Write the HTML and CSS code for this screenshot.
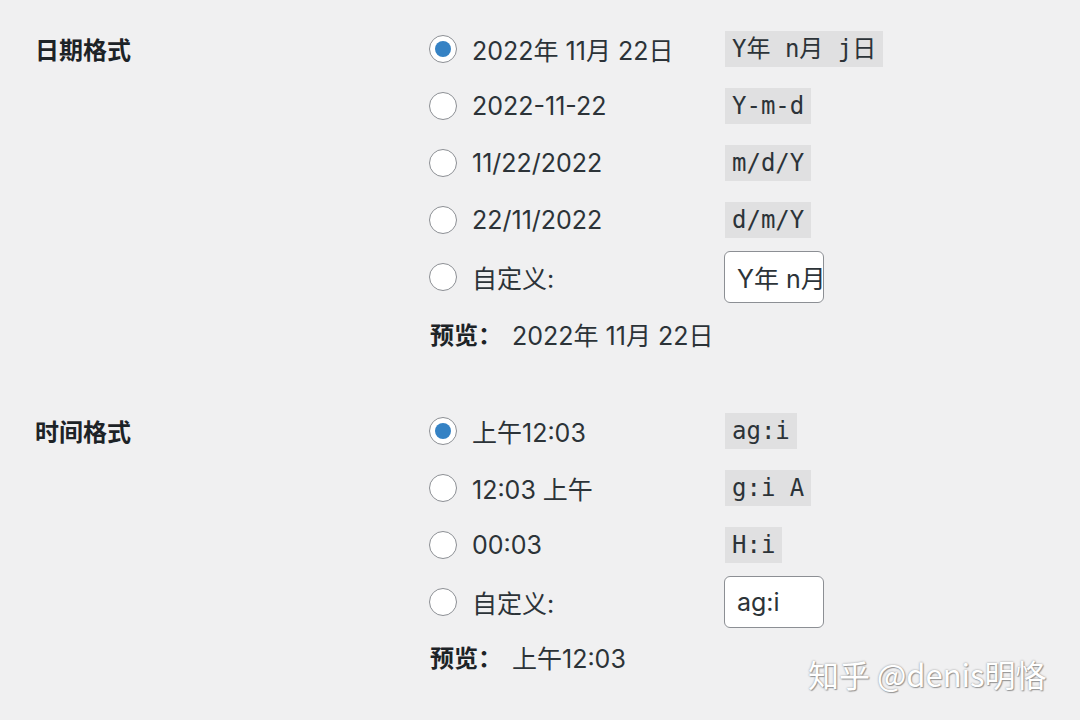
FILE: index.html
```html
<!DOCTYPE html>
<html lang="zh-CN">
<head>
<meta charset="utf-8">
<link rel="stylesheet" href="styles.css">
</head>
<body>
<div class="page">
  <section class="setting">
    <div class="th">日期格式</div>
    <div class="td">
      <label class="opt"><span class="radio checked"></span><span class="txt">2022年 11月 22日</span><code>Y年 n月 j日</code></label>
      <label class="opt"><span class="radio"></span><span class="txt">2022-11-22</span><code>Y-m-d</code></label>
      <label class="opt"><span class="radio"></span><span class="txt">11/22/2022</span><code>m/d/Y</code></label>
      <label class="opt"><span class="radio"></span><span class="txt">22/11/2022</span><code>d/m/Y</code></label>
      <label class="opt"><span class="radio"></span><span class="txt">自定义:</span><input class="input" type="text" value="Y年 n月 j日" readonly></label>
      <div class="preview"><strong>预览：</strong><span>2022年 11月 22日</span></div>
    </div>
  </section>
  <section class="setting second">
    <div class="th">时间格式</div>
    <div class="td">
      <label class="opt"><span class="radio checked"></span><span class="txt">上午12:03</span><code>ag:i</code></label>
      <label class="opt"><span class="radio"></span><span class="txt">12:03 上午</span><code>g:i A</code></label>
      <label class="opt"><span class="radio"></span><span class="txt">00:03</span><code>H:i</code></label>
      <label class="opt"><span class="radio"></span><span class="txt">自定义:</span><input class="input" type="text" value="ag:i" readonly></label>
      <div class="preview short"><strong>预览：</strong><span>上午12:03</span></div>
    </div>
  </section>
  <div class="watermark">知乎 @denis明恪</div>
</div>
</body>
</html>
```

FILE: styles.css
```css
html, body {
  margin: 0;
  padding: 0;
  background: #f0f0f1;
}
body {
  font-family: Inter, "Noto Sans CJK SC", sans-serif;
  color: #2c3338;
  font-size: 25px;
  width: 1080px;
  height: 720px;
  overflow: hidden;
}
.page {
  position: relative;
  padding: 20px 0 0 35px;
}
.setting {
  display: flex;
}
.setting.second {
  margin-top: 40px;
}
.th {
  width: 394px;
  flex: none;
  font-weight: bold;
  color: #1d2327;
  font-size: 24px;
  height: 57px;
  display: flex;
  align-items: center;
  font-family: "Noto Sans CJK SC", sans-serif;
}
.td {
  display: flex;
  flex-direction: column;
}
.opt {
  display: flex;
  align-items: center;
  height: 57px;
}
.radio {
  width: 28px;
  height: 28px;
  box-sizing: border-box;
  border: 1.5px solid #8c8f94;
  border-radius: 50%;
  background: #fff;
  margin: 0 15px 0 0;
  flex: none;
  display: flex;
  align-items: center;
  justify-content: center;
}
.radio.checked::after {
  content: "";
  width: 16px;
  height: 16px;
  border-radius: 50%;
  background: #3582c4;
}
.txt {
  width: 253px;
  flex: none;
  color: #2c3338;
}
code {
  font-family: "DejaVu Sans Mono", "Noto Sans CJK SC", monospace;
  font-size: 24px;
  background: #e0e0e1;
  padding: 3px 7px;
  line-height: 30px;
  color: #2c3338;
}
.input {
  box-sizing: border-box;
  width: 100px;
  height: 52px;
  border: 1px solid #8c8f94;
  border-radius: 6px;
  background: #fff;
  padding: 0 0 0 12px;
  margin: 0 0 0 -1px;
  font-family: Inter, "Noto Sans CJK SC", sans-serif;
  font-size: 25px;
  color: #2c3338;
  outline: none;
}
.preview {
  display: flex;
  align-items: center;
  height: 57px;
  margin-left: 1px;
}
.preview.short {
  height: 53px;
}
.preview strong {
  font-family: "Noto Sans CJK SC", sans-serif;
  font-size: 24px;
  color: #1d2327;
  margin-right: 10px;
}
.watermark {
  position: absolute;
  left: 808px;
  top: 651px;
  font-size: 31px;
  color: #ffffff;
  text-shadow: 0 0 2px #8a8a8a, 1px 1px 1px #9a9a9a;
  font-family: "Noto Sans CJK SC", sans-serif;
}
```
